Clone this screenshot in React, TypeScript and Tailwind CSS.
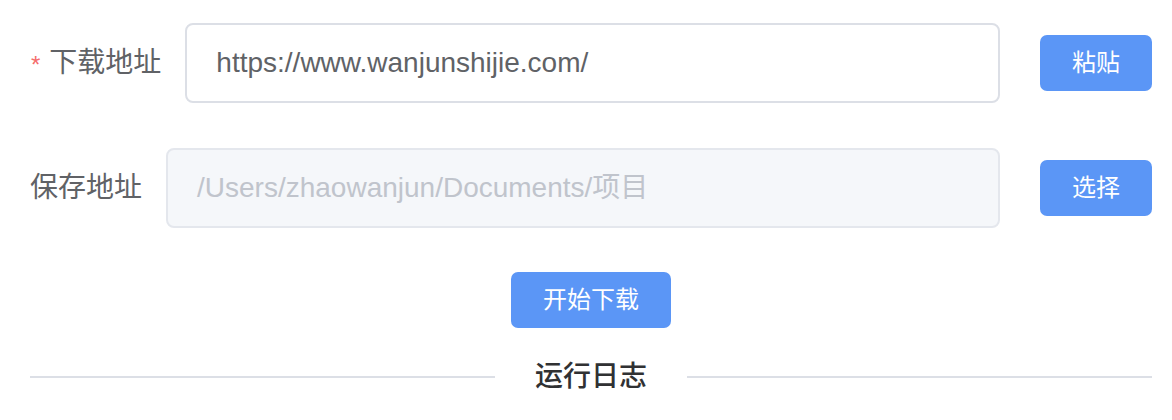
const font = { fontFamily: '"Liberation Sans", "Noto Sans CJK SC", sans-serif' };

function Btn({ children }: { children: string }) {
  return (
    <button className="h-[56px] shrink-0 rounded-[7px] bg-[#5b96f6] px-[32px] text-[24px] leading-none text-white">
      {children}
    </button>
  );
}

export default function App() {
  return (
    <div className="h-[420px] w-[1172px] overflow-hidden bg-white px-[20px] pt-[23px] pl-[30px]" style={font}>
      <form className="flex flex-col">
        <div className="flex h-[80px] items-center">
          <label className="flex items-center pr-[24px] text-[28px] leading-none text-[#606266]">
            <span className="mr-[9px] ml-[1px] mt-[4px] text-[24px] text-[#f56c6c]">*</span>
            下载地址
          </label>
          <div className="flex h-[80px] w-[815px] items-center rounded-[8px] border-2 border-[#dcdfe6] bg-white px-[29px] text-[28px] text-[#606266]">
            https://www.wanjunshijie.com/
          </div>
          <div className="ml-auto">
            <Btn>粘贴</Btn>
          </div>
        </div>

        <div className="mt-[45px] flex h-[80px] items-center">
          <label className="pr-[24px] text-[28px] leading-none text-[#606266]">保存地址</label>
          <div className="flex h-[80px] w-[834px] items-center rounded-[8px] border-2 border-[#e4e7ed] bg-[#f5f7fa] px-[29px] text-[28px] text-[#c0c4cc]">
            /Users/zhaowanjun/Documents/项目
          </div>
          <div className="ml-auto">
            <Btn>选择</Btn>
          </div>
        </div>

        <div className="mt-[44px] flex justify-center">
          <Btn>开始下载</Btn>
        </div>
      </form>

      <div className="mt-[35px] flex h-[28px] items-center">
        <div className="h-[2px] flex-1 bg-[#dcdfe6]" />
        <span className="px-[40px] text-[28px] font-medium leading-[28px] text-[#303133]">运行日志</span>
        <div className="h-[2px] flex-1 bg-[#dcdfe6]" />
      </div>
    </div>
  );
}
